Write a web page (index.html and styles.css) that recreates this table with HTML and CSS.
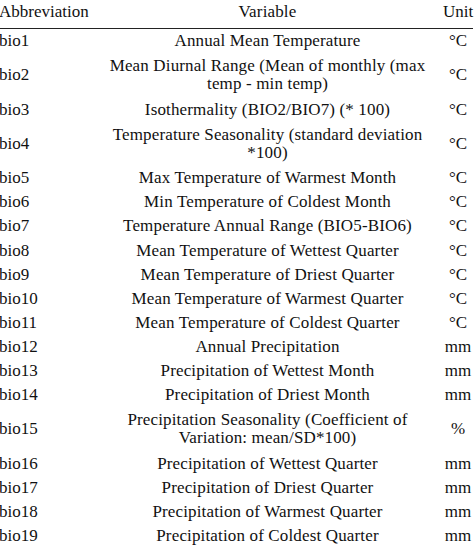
FILE: index.html
```html
<!DOCTYPE html>
<html lang="en">
<head>
<meta charset="utf-8">
<title>Bioclimatic variables</title>
<link rel="stylesheet" href="styles.css">
</head>
<body>
<div class="table">
  <div class="row head">
    <div class="c-abbr">Abbreviation</div>
    <div class="c-var">Variable</div>
    <div class="c-unit">Unit</div>
  </div>
  <div class="row"><div class="c-abbr">bio1</div><div class="c-var">Annual Mean Temperature</div><div class="c-unit">°C</div></div>
  <div class="row tall"><div class="c-abbr">bio2</div><div class="c-var">Mean Diurnal Range (Mean of monthly (max<br>temp - min temp)</div><div class="c-unit">°C</div></div>
  <div class="row"><div class="c-abbr">bio3</div><div class="c-var">Isothermality (BIO2/BIO7) (* 100)</div><div class="c-unit">°C</div></div>
  <div class="row tall"><div class="c-abbr">bio4</div><div class="c-var">Temperature Seasonality (standard deviation<br>*100)</div><div class="c-unit">°C</div></div>
  <div class="row"><div class="c-abbr">bio5</div><div class="c-var">Max Temperature of Warmest Month</div><div class="c-unit">°C</div></div>
  <div class="row"><div class="c-abbr">bio6</div><div class="c-var">Min Temperature of Coldest Month</div><div class="c-unit">°C</div></div>
  <div class="row"><div class="c-abbr">bio7</div><div class="c-var">Temperature Annual Range (BIO5-BIO6)</div><div class="c-unit">°C</div></div>
  <div class="row"><div class="c-abbr">bio8</div><div class="c-var">Mean Temperature of Wettest Quarter</div><div class="c-unit">°C</div></div>
  <div class="row"><div class="c-abbr">bio9</div><div class="c-var">Mean Temperature of Driest Quarter</div><div class="c-unit">°C</div></div>
  <div class="row"><div class="c-abbr">bio10</div><div class="c-var">Mean Temperature of Warmest Quarter</div><div class="c-unit">°C</div></div>
  <div class="row"><div class="c-abbr">bio11</div><div class="c-var">Mean Temperature of Coldest Quarter</div><div class="c-unit">°C</div></div>
  <div class="row"><div class="c-abbr">bio12</div><div class="c-var">Annual Precipitation</div><div class="c-unit">mm</div></div>
  <div class="row"><div class="c-abbr">bio13</div><div class="c-var">Precipitation of Wettest Month</div><div class="c-unit">mm</div></div>
  <div class="row"><div class="c-abbr">bio14</div><div class="c-var">Precipitation of Driest Month</div><div class="c-unit">mm</div></div>
  <div class="row tall"><div class="c-abbr">bio15</div><div class="c-var">Precipitation Seasonality (Coefficient of<br>Variation: mean/SD*100)</div><div class="c-unit">%</div></div>
  <div class="row"><div class="c-abbr">bio16</div><div class="c-var">Precipitation of Wettest Quarter</div><div class="c-unit">mm</div></div>
  <div class="row"><div class="c-abbr">bio17</div><div class="c-var">Precipitation of Driest Quarter</div><div class="c-unit">mm</div></div>
  <div class="row"><div class="c-abbr">bio18</div><div class="c-var">Precipitation of Warmest Quarter</div><div class="c-unit">mm</div></div>
  <div class="row"><div class="c-abbr">bio19</div><div class="c-var">Precipitation of Coldest Quarter</div><div class="c-unit">mm</div></div>
</div>
</body>
</html>
```

FILE: styles.css
```css
html, body {
  margin: 0;
  padding: 0;
  background: #ffffff;
}

body {
  font-family: "Liberation Serif", "DejaVu Serif", serif;
  font-size: 17px;
  line-height: 18px;
  color: #111111;
  overflow: hidden;
}

.table {
  width: 474px;
  margin-left: -1px;
}

.row {
  display: grid;
  grid-template-columns: 94px 349px 32px;
  align-items: center;
  height: 24.1px;
  white-space: nowrap;
}

.row.tall {
  height: 44.5px;
}

.row.head {
  align-items: start;
  padding-top: 2.5px;
  height: 25.5px;
  border-bottom: 1.5px solid #222222;
}

.c-abbr {
  text-align: left;
}

.c-var {
  text-align: center;
  letter-spacing: 0.15px;
}

.c-unit {
  text-align: center;
}
```
